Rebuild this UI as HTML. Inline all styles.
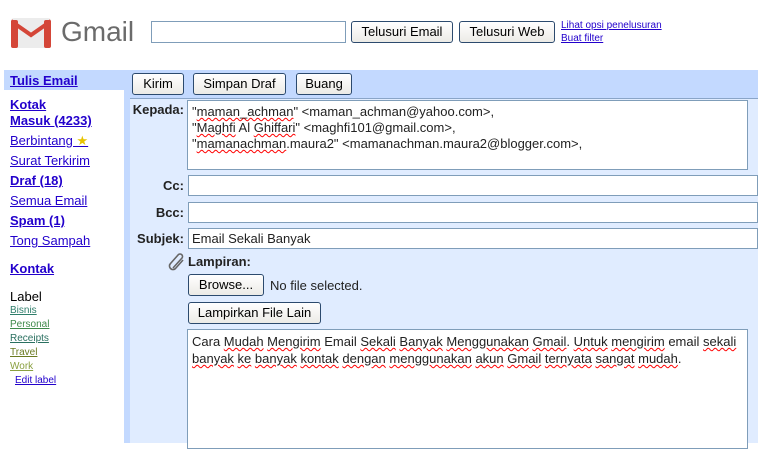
<!DOCTYPE html>
<html><head><meta charset="utf-8"><style>
body{margin:0;width:758px;height:443px;overflow:hidden;background:#fff;font-family:"Liberation Sans",Arial,sans-serif;font-size:13px;position:relative}
.a{position:absolute;white-space:nowrap}
a,.l{color:#2200cc;text-decoration:underline}
.btn{position:absolute;border:1px solid #2c4a6e;border-radius:3px;background:linear-gradient(#fff,#ecebe6);font-size:13px;color:#000;text-align:center;box-sizing:border-box;line-height:20px}
.inp{position:absolute;background:#fff;border:1px solid #7f9db9;box-sizing:border-box}
.lab{position:absolute;font-weight:bold;color:#222;text-align:right;width:60px}
.sq{text-decoration:underline wavy red;text-decoration-thickness:1px}
.side a{position:absolute;left:10px;font-size:13px}
.lb{position:absolute;left:10px;font-size:10px;text-decoration:underline}
</style></head><body>
<svg class="a" style="left:11px;top:18px" width="40" height="30" viewBox="0 0 40 30">
<rect x="0" y="0" width="40" height="30" rx="3" fill="#ececec"/>
<path d="M0 3 L20 17 L40 3" fill="none" stroke="#d44638" stroke-width="4"/>
<rect x="0" y="2" width="7" height="28" rx="2" fill="#d44638"/>
<rect x="33" y="2" width="7" height="28" rx="2" fill="#d44638"/>
</svg>
<div class="a" style="left:61px;top:16px;font-size:28px;color:#6b6b6b">Gmail</div>
<div class="inp" style="left:151px;top:21px;width:195px;height:22px"></div>
<div class="btn" style="left:351px;top:21px;width:102px;height:22px">Telusuri Email</div>
<div class="btn" style="left:459px;top:21px;width:96px;height:22px">Telusuri Web</div>
<div class="a l" style="left:561px;top:20px;font-size:10px">Lihat opsi penelusuran</div>
<div class="a l" style="left:561px;top:33px;font-size:10px">Buat filter</div>

<div class="a" style="left:4px;top:70px;width:120px;height:20px;background:#c3d9ff"></div>
<div class="side">
<a style="top:73px;font-weight:bold">Tulis Email</a>
<a style="top:97px;font-weight:bold">Kotak</a>
<a style="top:113px;font-weight:bold">Masuk (4233)</a>
<a style="top:133px">Berbintang <span style="color:#e8c400;text-decoration:none">★</span></a>
<a style="top:153px">Surat Terkirim</a>
<a style="top:173px;font-weight:bold">Draf (18)</a>
<a style="top:193px">Semua Email</a>
<a style="top:213px;font-weight:bold">Spam (1)</a>
<a style="top:233px">Tong Sampah</a>
<a style="top:261px;font-weight:bold">Kontak</a>
</div>
<div class="a" style="left:10px;top:289px;font-size:13px;color:#000">Label</div>
<div class="lb" style="top:305px;color:#2e7d6a">Bisnis</div>
<div class="lb" style="top:319px;color:#3f8a4a">Personal</div>
<div class="lb" style="top:333px;color:#2a7060">Receipts</div>
<div class="lb" style="top:347px;color:#6a7a20">Travel</div>
<div class="lb" style="top:361px;color:#8aa040">Work</div>
<div class="lb" style="top:375px;left:15px;color:#2200cc">Edit label</div>

<div class="a" style="left:124px;top:70px;width:634px;height:373px;background:#e0ecff"></div>
<div class="a" style="left:124px;top:70px;width:634px;height:28px;background:#c3d9ff"></div>
<div class="a" style="left:124px;top:70px;width:6px;height:373px;background:#c3d9ff"></div>
<div class="a" style="left:130px;top:98px;width:628px;height:1px;background:#8aa5c8"></div>
<div class="btn" style="left:132px;top:73px;width:52px;height:22px">Kirim</div>
<div class="btn" style="left:193px;top:73px;width:93px;height:22px">Simpan Draf</div>
<div class="btn" style="left:296px;top:73px;width:56px;height:22px">Buang</div>

<div class="lab" style="left:124px;top:102px">Kepada:</div>
<div class="inp" style="left:187px;top:100px;width:561px;height:70px;padding:3px 0 0 4px;line-height:16px;color:#222">"<span class="sq">maman_achman</span>" &lt;maman_achman@yahoo.com&gt;,<br>"<span class="sq">Maghfi</span> Al <span class="sq">Ghiffari</span>" &lt;maghfi101@gmail.com&gt;,<br>"<span class="sq">mamanachman</span>.maura2" &lt;mamanachman.maura2@blogger.com&gt;,</div>
<div class="lab" style="left:124px;top:178px">Cc:</div>
<div class="inp" style="left:188px;top:175px;width:570px;height:21px"></div>
<div class="lab" style="left:124px;top:205px">Bcc:</div>
<div class="inp" style="left:188px;top:202px;width:570px;height:21px"></div>
<div class="lab" style="left:124px;top:231px">Subjek:</div>
<div class="inp" style="left:188px;top:228px;width:570px;height:21px;padding:2px 0 0 3px;color:#222">Email Sekali Banyak</div>
<svg class="a" style="left:168px;top:253px" width="18" height="18" viewBox="0 0 18 18"><path d="M5 15 L14 5 A2.5 2.5 0 0 0 10.5 1.5 L2.5 10.5 A3.5 3.5 0 0 0 7.5 15.5 L15 7" fill="none" stroke="#666" stroke-width="1.6"/></svg>
<div class="a" style="left:188px;top:254px;font-weight:bold;color:#222">Lampiran:</div>
<div class="btn" style="left:188px;top:274px;width:76px;height:22px">Browse...</div>
<div class="a" style="left:270px;top:278px;color:#222">No file selected.</div>
<div class="btn" style="left:188px;top:302px;width:133px;height:22px">Lampirkan File Lain</div>
<div class="inp" style="left:187px;top:329px;width:561px;height:120px;padding:3px 0 0 4px;line-height:17px;color:#222;white-space:normal">Cara <span class="sq">Mudah</span> <span class="sq">Mengirim</span> Email <span class="sq">Sekali</span> <span class="sq">Banyak</span> <span class="sq">Menggunakan</span> <span class="sq">Gmail</span>. <span class="sq">Untuk</span> <span class="sq">mengirim</span> email <span class="sq">sekali</span><br><span class="sq">banyak</span> <span class="sq">ke</span> <span class="sq">banyak</span> <span class="sq">kontak</span> <span class="sq">dengan</span> <span class="sq">menggunakan</span> <span class="sq">akun</span> <span class="sq">Gmail</span> <span class="sq">ternyata</span> <span class="sq">sangat</span> <span class="sq">mudah</span>.</div>
</body></html>
